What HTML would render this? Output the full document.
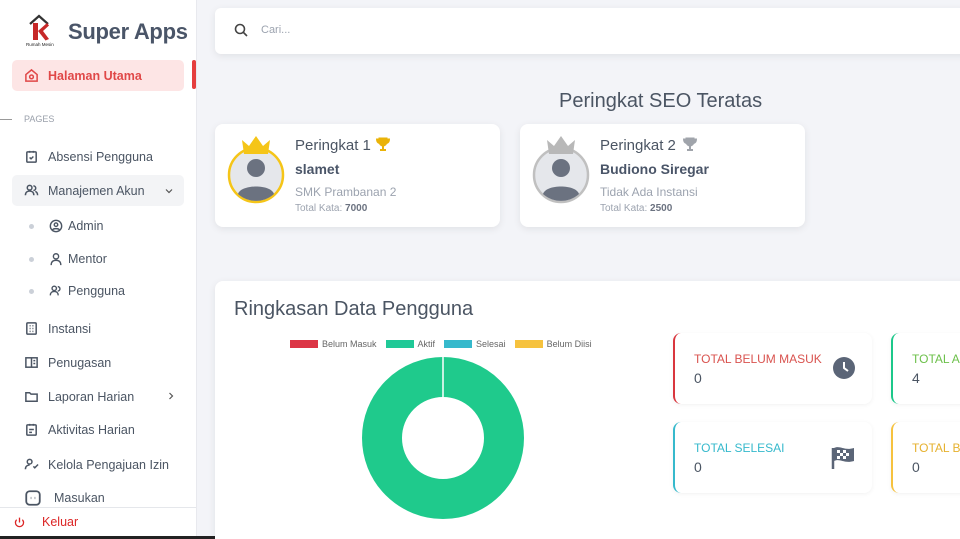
<!DOCTYPE html><html><head><style>
*{box-sizing:border-box;margin:0;padding:0}
html,body{width:960px;height:539px;overflow:hidden}
body{background:#f3f4f8;font-family:"Liberation Sans",sans-serif;color:#4b5563}
#w{position:relative;width:960px;height:539px;overflow:hidden}
.sb{position:absolute;left:0;top:0;width:197px;height:539px;background:#fff;border-right:1px solid #e8e9ee}
.it{position:absolute;left:24px;font-size:12.5px;color:#4b5563;display:flex;align-items:center;white-space:nowrap}
.it svg{width:15px;height:15px;margin-right:9px;stroke:#4b5563;fill:none;stroke-width:1.6}
.sub{position:absolute;left:29px;font-size:12.5px;color:#4b5563;display:flex;align-items:center}
.sub .d{width:5px;height:5px;border-radius:50%;background:#cbd0d8;margin-right:15px}
.sub svg{width:14px;height:14px;margin-right:5px;stroke:#4b5563;fill:none;stroke-width:1.6}
.card{position:absolute;background:#fff;border-radius:8px;box-shadow:0 2px 8px rgba(0,0,0,.08)}
.st{position:absolute;background:#fff;border-radius:8px;box-shadow:0 1px 5px rgba(0,0,0,.06);border-left:2px solid}
.st .l{position:absolute;left:19px;top:19px;font-size:12px;white-space:nowrap}
.st .v{position:absolute;left:19px;top:37px;font-size:14px;color:#4b5563}
</style></head><body><div id="w">
<div class="sb">
<div style="position:absolute;left:25px;top:14px;width:36px;height:34px">
<svg width="36" height="34" viewBox="0 0 36 34"><path d="M5 10 L14 2 L23 10" stroke="#333" stroke-width="2.2" fill="none"/><rect x="8" y="9" width="5" height="17" fill="#c62828"/><path d="M13 17 L22 9 L24 11.5 L18 17 L24 25 L20.5 26.5 Z" fill="#c62828"/><text x="1" y="32" font-size="4.5" fill="#222" font-family="Liberation Sans">Rumah Mesin</text></svg></div>
<div style="position:absolute;left:68px;top:19px;font-size:22px;font-weight:bold;color:#4a5568;white-space:nowrap;letter-spacing:-0.3px">Super Apps</div>
<div style="position:absolute;left:12px;top:60px;width:172px;height:31px;background:#fde5e5;border-radius:5px"></div>
<div style="position:absolute;left:192px;top:60px;width:4px;height:29px;background:#e53e3e;border-radius:2px"></div>
<div class="it" style="top:68px;color:#e04848;font-weight:bold"><svg viewBox="0 0 16 16" style="stroke:#e04848"><path d="M2 7 L8 2 L14 7 V14 H2 Z"/><circle cx="8" cy="9.5" r="2"/></svg>Halaman Utama</div>
<div style="position:absolute;left:0;top:119px;width:12px;height:1px;background:#999"></div>
<div style="position:absolute;left:24px;top:114px;font-size:9px;color:#9aa0ab">PAGES</div>
<div class="it" style="top:149px"><svg viewBox="0 0 16 16"><rect x="3" y="3" width="10" height="11" rx="1"/><path d="M6 2v2M10 2v2M6 9l1.5 1.5L10 8"/></svg>Absensi Pengguna</div>
<div style="position:absolute;left:12px;top:175px;width:172px;height:31px;background:#f3f4f6;border-radius:5px"></div>
<div class="it" style="top:183px"><svg viewBox="0 0 16 16"><circle cx="6" cy="5" r="2.5"/><path d="M1.5 13c0-3 2-4.5 4.5-4.5S10.5 10 10.5 13M10 3a2.5 2.5 0 010 5M12 9c1.5.5 2.5 2 2.5 4"/></svg>Manajemen Akun</div>
<svg style="position:absolute;left:165px;top:188px" width="8" height="6" viewBox="0 0 8 6"><path d="M1 1.5l3 3 3-3" stroke="#555" fill="none" stroke-width="1.2"/></svg>
<div class="sub" style="top:219px"><span class="d"></span><svg viewBox="0 0 16 16"><circle cx="8" cy="8" r="6.5"/><circle cx="8" cy="6.5" r="2"/><path d="M4 12.5c1-2 7-2 8 0"/></svg>Admin</div>
<div class="sub" style="top:252px"><span class="d"></span><svg viewBox="0 0 16 16"><circle cx="8" cy="5" r="3"/><path d="M2.5 15c0-4 2.5-5.5 5.5-5.5s5.5 1.5 5.5 5.5"/></svg>Mentor</div>
<div class="sub" style="top:284px"><span class="d"></span><svg viewBox="0 0 16 16"><circle cx="6" cy="5" r="2.5"/><path d="M1.5 13c0-3 2-4.5 4.5-4.5S10.5 10 10.5 13M10 3a2.5 2.5 0 010 5"/></svg>Pengguna</div>
<div class="it" style="top:321px"><svg viewBox="0 0 16 16"><rect x="3" y="2" width="10" height="12" rx="1"/><path d="M6 5h1M9 5h1M6 8h1M9 8h1M6 11h1M9 11h1"/></svg>Instansi</div>
<div class="it" style="top:355px"><svg viewBox="0 0 16 16"><rect x="2" y="3" width="12" height="10"/><path d="M8 3v10M10 6h2M10 9h2"/></svg>Penugasan</div>
<div class="it" style="top:389px"><svg viewBox="0 0 16 16"><path d="M2 4h4l1.5 1.5H14V13H2Z"/></svg>Laporan Harian</div>
<svg style="position:absolute;left:168px;top:392px" width="6" height="8" viewBox="0 0 6 8"><path d="M1.5 1l3 3-3 3" stroke="#555" fill="none" stroke-width="1.2"/></svg>
<div class="it" style="top:422px"><svg viewBox="0 0 16 16"><rect x="3" y="3" width="10" height="11" rx="1"/><path d="M6 2v2M10 2v2M5.5 8h5M5.5 11h3"/></svg>Aktivitas Harian</div>
<div class="it" style="top:457px"><svg viewBox="0 0 16 16"><circle cx="6" cy="5" r="2.5"/><path d="M1.5 13c0-3 2-4.5 4.5-4.5M10 10l1.5 1.5L15 8"/></svg>Kelola Pengajuan Izin</div>
<div class="it" style="top:489px"><svg viewBox="0 0 16 16" style="width:18px;height:18px;margin-right:12px"><rect x="2" y="2" width="12" height="12" rx="3"/><path d="M6 8h.5M9.5 8h.5" stroke-width="2"/></svg>Masukan</div>
<div style="position:absolute;left:0;top:507px;width:196px;height:1px;background:#e5e7eb"></div>
<div class="it" style="left:13px;top:515px;color:#dc2626"><svg viewBox="0 0 16 16" style="stroke:#dc2626;width:13px;height:13px;margin-right:16px"><path d="M8 2v6M4.5 4.5a5 5 0 107 0"/></svg>Keluar</div>
</div>
<div class="card" style="left:215px;top:8px;width:760px;height:46px;border-radius:6px"></div>
<svg style="position:absolute;left:234px;top:23px" width="14" height="14" viewBox="0 0 14 14"><circle cx="6" cy="6" r="4.5" stroke="#444" stroke-width="1.6" fill="none"/><path d="M9.5 9.5L13 13" stroke="#444" stroke-width="1.6"/></svg>
<div style="position:absolute;left:261px;top:24px;font-size:11px;color:#9ca3af">Cari...</div>
<div style="position:absolute;left:559px;top:90px;font-size:20px;color:#4b5563;white-space:nowrap">Peringkat SEO Teratas</div>
<div class="card" style="left:215px;top:124px;width:285px;height:103px"></div>
<div class="card" style="left:520px;top:124px;width:285px;height:103px"></div>
<svg style="position:absolute;left:226px;top:134px" width="60" height="72" viewBox="0 0 60 72"><circle cx="30" cy="41" r="27" fill="#e5e7eb" stroke="#f5c518" stroke-width="2.5"/><circle cx="30" cy="34" r="9" fill="#6b7280"/><path d="M12 60c3-10 33-10 36 0 a27 27 0 01-36 0Z" fill="#6b7280"/><path d="M18 20 L16 6 L23 12 L30 2 L37 12 L44 6 L42 20Z" fill="#f5c518"/></svg>
<svg style="position:absolute;left:531px;top:134px" width="60" height="72" viewBox="0 0 60 72"><circle cx="30" cy="41" r="27" fill="#e5e7eb" stroke="#c0c0c0" stroke-width="2.5"/><circle cx="30" cy="34" r="9" fill="#6b7280"/><path d="M12 60c3-10 33-10 36 0 a27 27 0 01-36 0Z" fill="#6b7280"/><path d="M18 20 L16 6 L23 12 L30 2 L37 12 L44 6 L42 20Z" fill="#b8b8b8"/></svg>
<div style="position:absolute;left:295px;top:137px;font-size:15px;color:#4b5563">Peringkat 1</div>
<svg style="position:absolute;left:375px;top:137px" width="16" height="15" viewBox="0 0 16 15"><path d="M4 1h8v4a4 4 0 01-8 0Z M4 2H1.5c0 3 1 4 3 4.5M12 2h2.5c0 3-1 4-3 4.5" fill="#eab308" stroke="#eab308" stroke-width="1"/><path d="M7 9h2v3H7zM5 12h6v2H5z" fill="#eab308"/></svg>
<div style="position:absolute;left:295px;top:161px;font-size:14px;font-weight:bold;color:#4a5568">slamet</div>
<div style="position:absolute;left:295px;top:185px;font-size:12px;color:#9ca3af">SMK Prambanan 2</div>
<div style="position:absolute;left:295px;top:203px;font-size:10px;color:#9ca3af">Total Kata: <b style="color:#6b7280">7000</b></div>
<div style="position:absolute;left:600px;top:137px;font-size:15px;color:#4b5563">Peringkat 2</div>
<svg style="position:absolute;left:682px;top:137px" width="16" height="15" viewBox="0 0 16 15"><path d="M4 1h8v4a4 4 0 01-8 0Z M4 2H1.5c0 3 1 4 3 4.5M12 2h2.5c0 3-1 4-3 4.5" fill="#a0a4ab" stroke="#a0a4ab" stroke-width="1"/><path d="M7 9h2v3H7zM5 12h6v2H5z" fill="#a0a4ab"/></svg>
<div style="position:absolute;left:600px;top:161px;font-size:14px;font-weight:bold;color:#4a5568">Budiono Siregar</div>
<div style="position:absolute;left:600px;top:185px;font-size:12px;color:#9ca3af">Tidak Ada Instansi</div>
<div style="position:absolute;left:600px;top:203px;font-size:10px;color:#9ca3af">Total Kata: <b style="color:#6b7280">2500</b></div>
<div class="card" style="left:215px;top:281px;width:760px;height:270px"></div>
<div style="position:absolute;left:234px;top:298px;font-size:20px;color:#4b5563;white-space:nowrap">Ringkasan Data Pengguna</div>
<div style="position:absolute;left:290px;top:339px;font-size:9px;color:#666;display:flex;align-items:center;gap:4px;white-space:nowrap">
<span style="width:28px;height:8px;background:#dc3545;display:inline-block"></span>Belum Masuk&nbsp;&nbsp;
<span style="width:28px;height:8px;background:#20c997;display:inline-block"></span>Aktif&nbsp;&nbsp;
<span style="width:28px;height:8px;background:#36b9cc;display:inline-block"></span>Selesai&nbsp;&nbsp;
<span style="width:28px;height:8px;background:#f6c23e;display:inline-block"></span>Belum Diisi</div>
<svg style="position:absolute;left:361px;top:356px" width="164" height="164"><circle cx="82" cy="82" r="61" fill="none" stroke="#1fca8c" stroke-width="40"/><line x1="82" y1="0" x2="82" y2="42" stroke="#fff" stroke-width="1.5"/></svg>
<div class="st" style="left:673px;top:333px;width:199px;height:71px;border-color:#d9363e"><div class="l" style="color:#d9534f">TOTAL BELUM MASUK</div><div class="v">0</div>
<svg style="position:absolute;left:157px;top:23px" width="24" height="24" viewBox="0 0 24 24"><circle cx="12" cy="12" r="11" fill="#5b6577"/><path d="M12 6v6l4 3" stroke="#fff" stroke-width="2" fill="none"/></svg></div>
<div class="st" style="left:891px;top:333px;width:199px;height:71px;border-color:#1cc88a"><div class="l" style="color:#6cc04a">TOTAL AKTIF</div><div class="v">4</div></div>
<div class="st" style="left:673px;top:422px;width:199px;height:71px;border-color:#36b9cc"><div class="l" style="color:#36b9cc">TOTAL SELESAI</div><div class="v">0</div>
<svg style="position:absolute;left:155px;top:22px" width="26" height="26" viewBox="0 0 26 26"><path d="M3 25V4" stroke="#5b6577" stroke-width="2.5"/><path d="M4 4c6-3 10 3 20 0v13c-10 3-14-3-20 0Z" fill="#5b6577"/><path d="M7 6h3v3H7zM13 6h3v3h-3zM10 9h3v3h-3zM16 9h3v3h-3zM7 12h3v3H7zM13 12h3v3h-3z" fill="#fff"/></svg></div>
<div class="st" style="left:891px;top:422px;width:199px;height:71px;border-color:#f6c23e"><div class="l" style="color:#e6b12e">TOTAL BELUM DIISI</div><div class="v">0</div></div>
<div style="position:absolute;left:0;top:536px;width:215px;height:3px;background:#222"></div>
</div></body></html>
